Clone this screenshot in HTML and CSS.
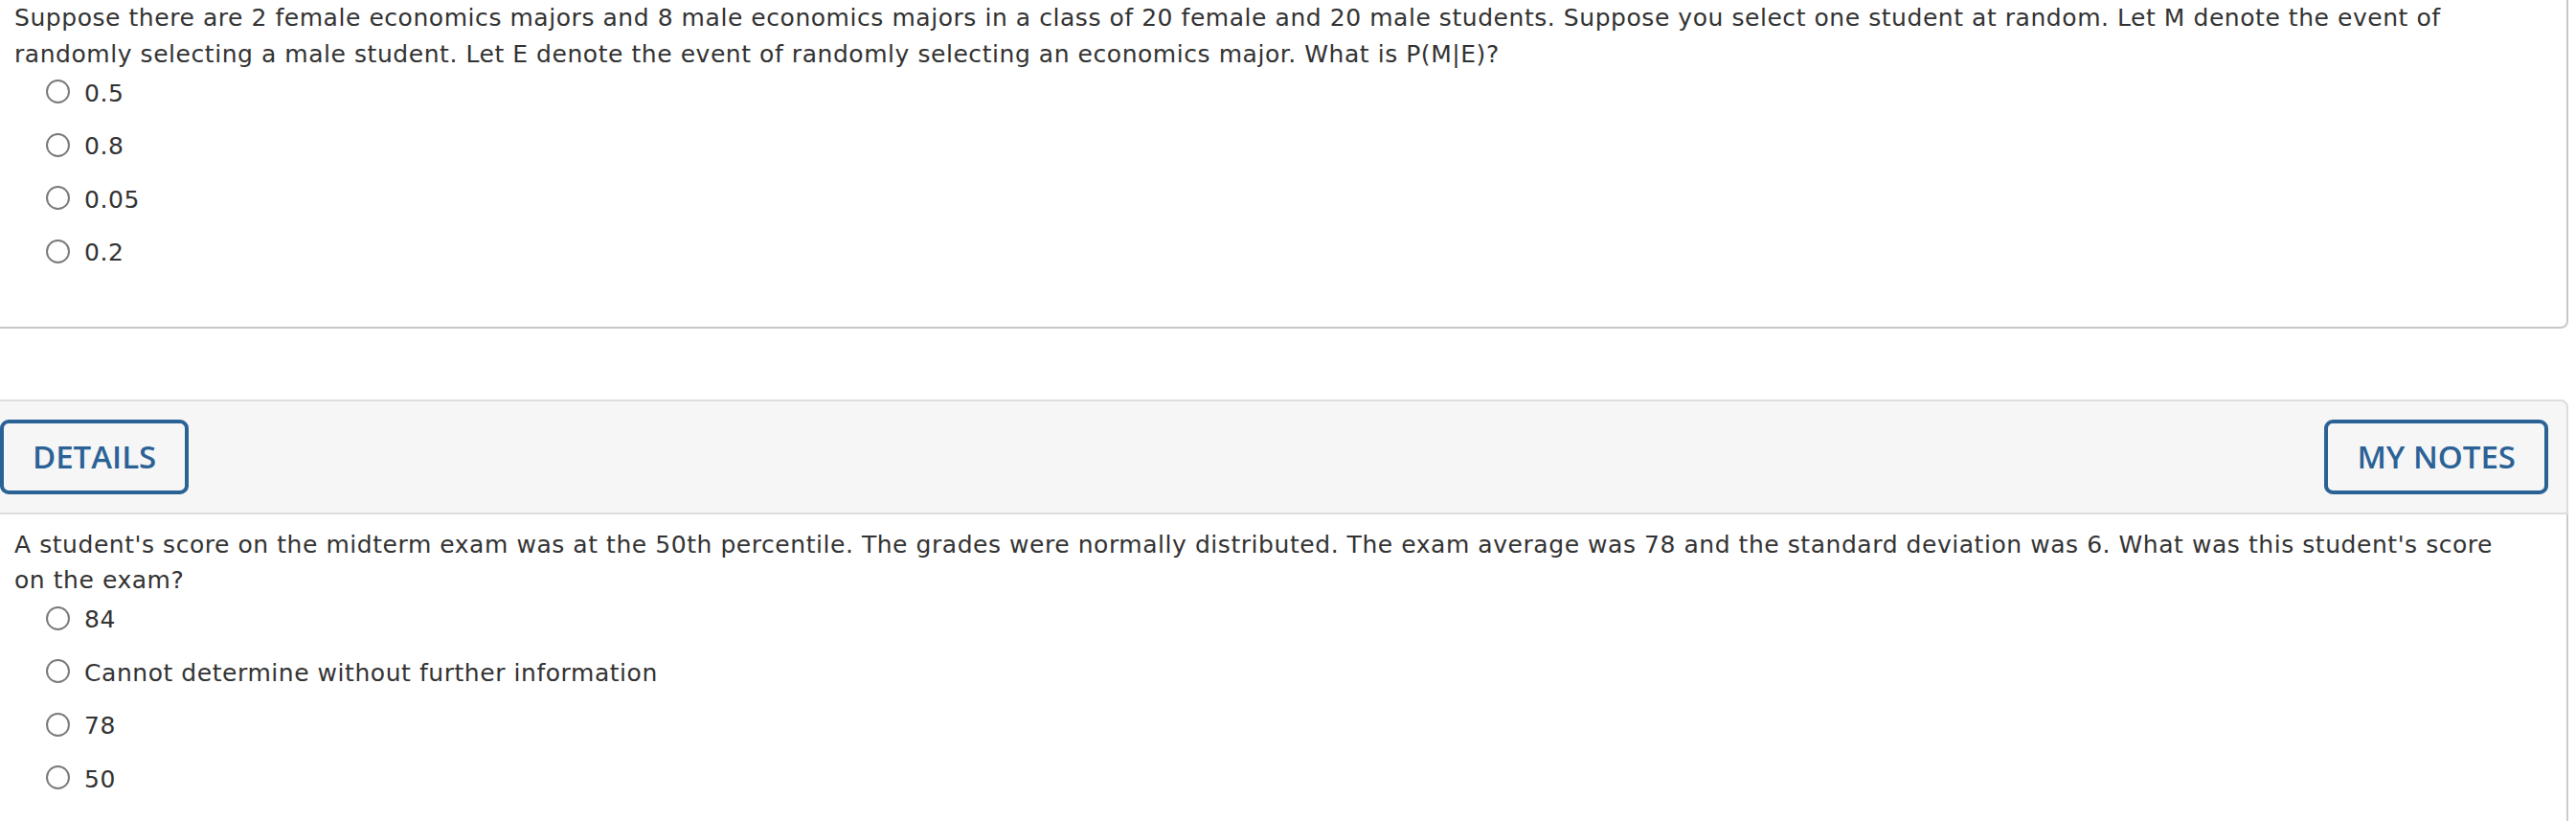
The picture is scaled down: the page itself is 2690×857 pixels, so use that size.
FILE: index.html
```html
<!DOCTYPE html>
<html lang="en">
<head>
<meta charset="utf-8">
<title>Questions</title>
<link rel="stylesheet" href="styles.css">
</head>
<body>
<div class="page">
  <div class="question q1">
    <div class="qbody">
      <div class="prompt">Suppose there are 2 female economics majors and 8 male economics majors in a class of 20 female and 20 male students. Suppose you select one student at random. Let M denote the event of randomly selecting a male student. Let E denote the event of randomly selecting an economics major. What is P(M|E)?</div>
      <ul class="options">
        <li class="option"><span class="radio"></span><span class="label">0.5</span></li>
        <li class="option"><span class="radio"></span><span class="label">0.8</span></li>
        <li class="option"><span class="radio"></span><span class="label">0.05</span></li>
        <li class="option"><span class="radio"></span><span class="label">0.2</span></li>
      </ul>
    </div>
  </div>
  <div class="question q2">
    <div class="qheader">
      <button class="btn">DETAILS</button>
      <button class="btn">MY NOTES</button>
    </div>
    <div class="qbody">
      <div class="prompt">A student's score on the midterm exam was at the 50th percentile. The grades were normally distributed. The exam average was 78 and the standard deviation was 6. What was this student's score on the exam?</div>
      <ul class="options">
        <li class="option"><span class="radio"></span><span class="label">84</span></li>
        <li class="option"><span class="radio"></span><span class="label">Cannot determine without further information</span></li>
        <li class="option"><span class="radio"></span><span class="label">78</span></li>
        <li class="option"><span class="radio"></span><span class="label">50</span></li>
      </ul>
    </div>
  </div>
</div>
</body>
</html>
```
FILE: styles.css
```css
html, body {
  margin: 0;
  padding: 0;
  background: #ffffff;
}
body {
  font-family: "DejaVu Sans", Verdana, sans-serif;
  font-size: 25px;
  line-height: 37.5px;
  letter-spacing: 0.55px;
  color: #333333;
  overflow: hidden;
}
.page {
  margin: 0 8px 0 -21px;
}
.question {
  box-sizing: border-box;
}
.q1 {
  border: 2px solid #c8c8c8;
  border-top: none;
  border-radius: 0 0 8px 8px;
}
.q1 .qbody {
  padding: 0 56px 58px 34px;
}
.q2 {
  margin-top: 74px;
}
.qheader {
  display: flex;
  justify-content: space-between;
  align-items: center;
  padding: 19px;
  background: #f6f6f6;
  border: 2px solid #dddddd;
  border-radius: 8px 8px 0 0;
}
.btn {
  box-sizing: border-box;
  height: 78px;
  padding: 0 30px;
  border: 4px solid #2b6296;
  border-radius: 9px;
  background: transparent;
  color: #2b6296;
  font-family: "Open Sans", sans-serif;
  font-weight: 600;
  font-size: 33px;
  line-height: 1;
  letter-spacing: 0;
  display: flex;
  align-items: center;
}
.q2 .qbody {
  padding: 13px 56px 40px 34px;
  border-left: 2px solid #cccccc;
  border-right: 2px solid #cccccc;
}
.options {
  list-style: none;
  margin: 3.5px 0 0 0;
  padding: 0 0 0 33px;
}
.option {
  display: flex;
  align-items: center;
  margin-bottom: 18px;
}
.option:last-child {
  margin-bottom: 0;
}
.radio {
  box-sizing: border-box;
  width: 25px;
  height: 25px;
  border: 2px solid #7a7a7a;
  border-radius: 50%;
  background: #ffffff;
  margin: 0 15px 3px 0;
  flex: none;
}
```
